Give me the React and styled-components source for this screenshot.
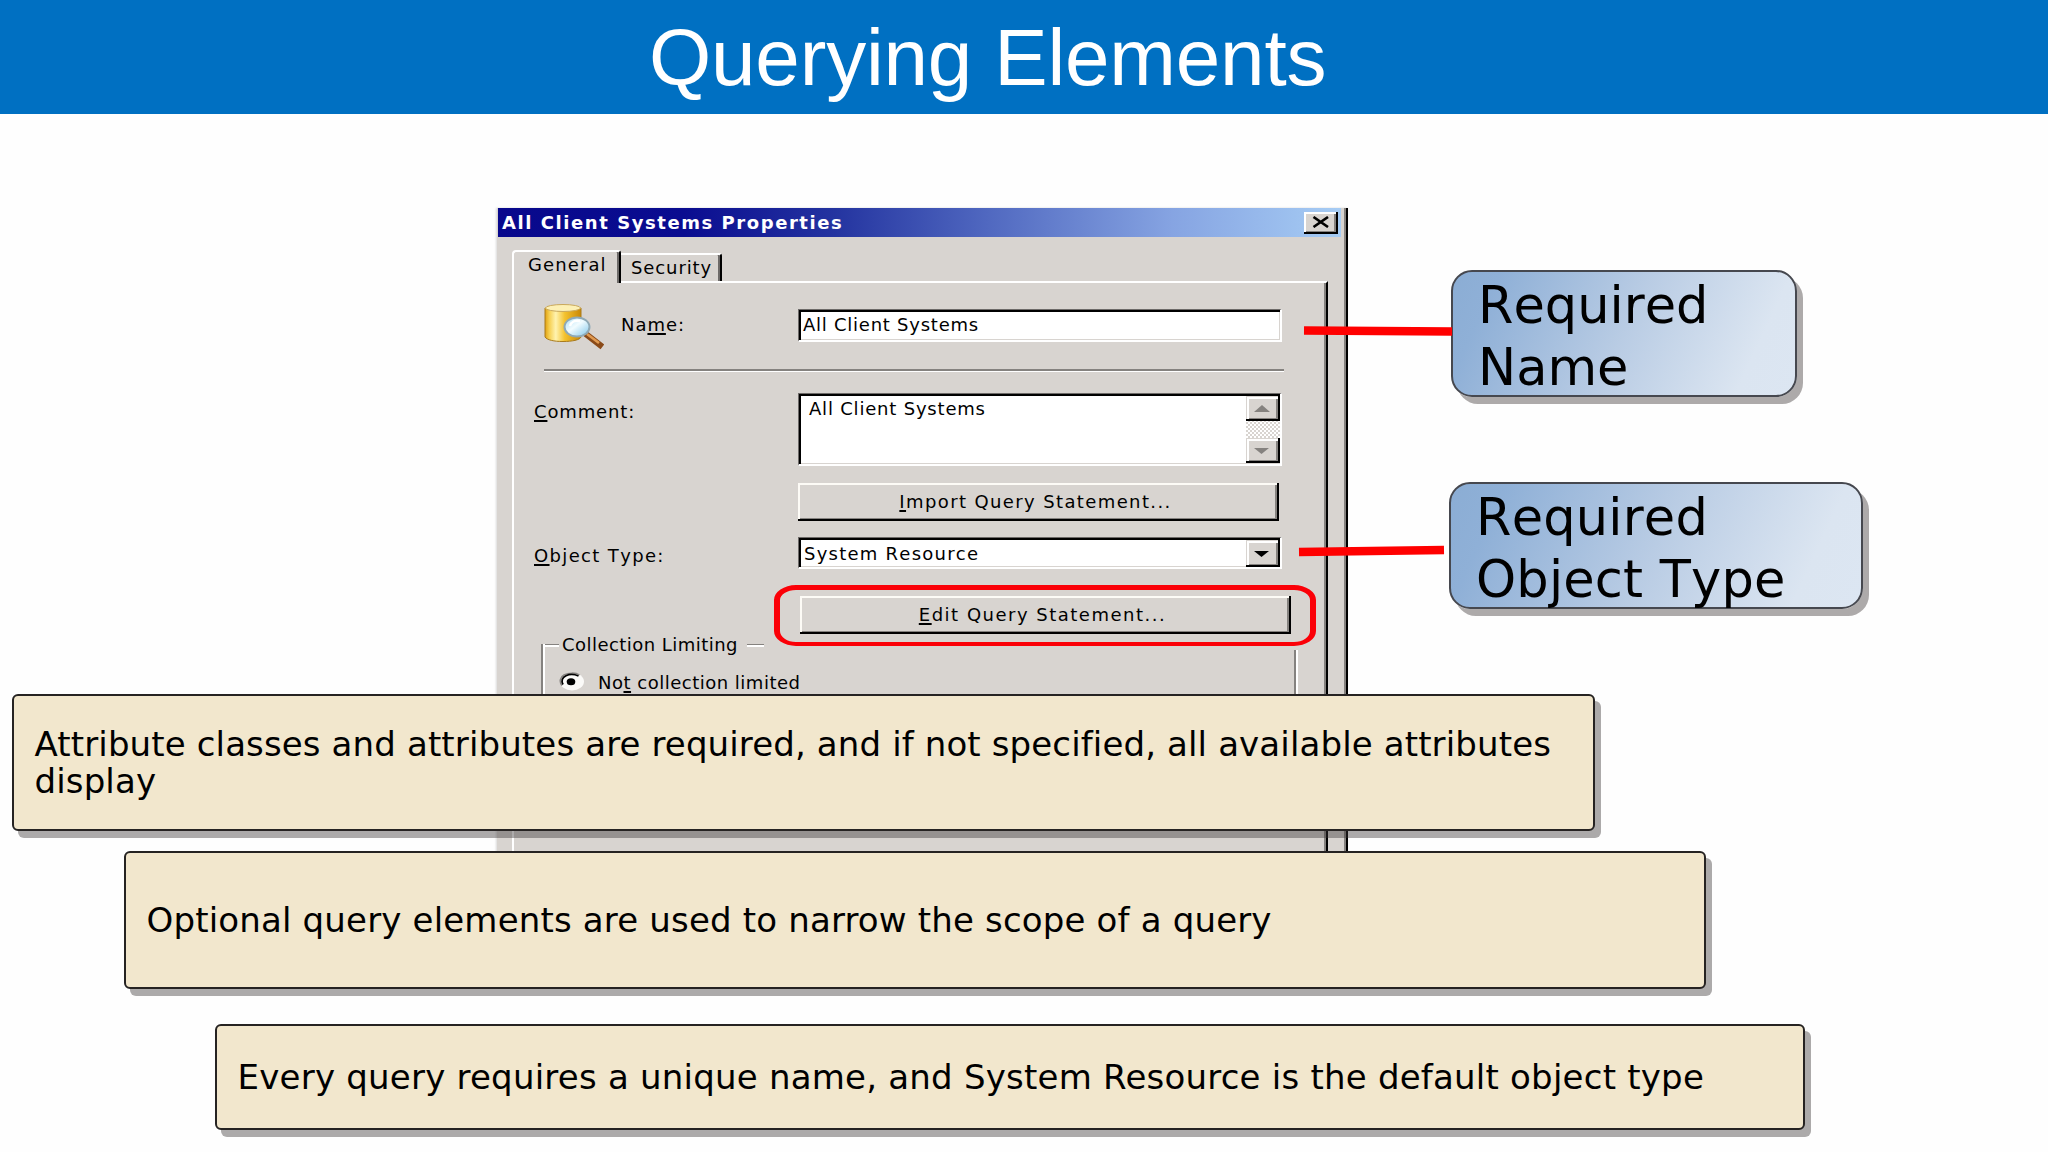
import React from "react";
import styled, { createGlobalStyle } from "styled-components";

const GlobalStyle = createGlobalStyle`
  *,
  *::after {
    box-sizing: border-box;
  }
  body {
    margin: 0;
    background-color: #fefefe;
    overflow: hidden;
  }
`;

const Slide = styled.div`
  position: relative;
  width: 2048px;
  height: 1152px;
  overflow: hidden;
  color: #000;
  font-family: "DejaVu Sans", Verdana, sans-serif;
`;

const Header = styled.header`
  height: 114px;
  padding-left: 649px;
  background-color: #0070c2;
`;

const Title = styled.h1`
  margin: 0;
  color: #fff;
  font-family: "Liberation Sans", Arial, sans-serif;
  font-size: 80px;
  font-weight: normal;
  letter-spacing: -0.18px;
  line-height: 116px;
  white-space: nowrap;
`;

const Window = styled.section`
  position: absolute;
  left: 497px;
  top: 208px;
  width: 851px;
  height: 660px;
  display: flex;
  flex-direction: column;
  background-color: #d8d4d0;
  border-right: 2px solid #000;
  box-shadow: inset -2px 0 0 #85827f, -1px 0 2px rgba(0, 0, 0, 0.15);
  font-size: 18px;
  font-kerning: none;
`;

const TitleBar = styled.div`
  display: flex;
  align-items: center;
  justify-content: space-between;
  height: 29px;
  margin: 0 5px 0 1px;
  padding: 0 3px 0 4px;
  background: linear-gradient(
    90deg,
    #08088c 0%,
    #0a0c90 22%,
    #2434a0 40%,
    #5068c0 58%,
    #86a4e2 80%,
    #a6ccf4 100%
  );
`;

const WindowTitle = styled.span`
  color: #fff;
  font-weight: bold;
  letter-spacing: 1.56px;
  line-height: 29px;
  white-space: nowrap;
`;

const CloseButton = styled.button`
  display: flex;
  align-items: center;
  justify-content: center;
  width: 34px;
  height: 22px;
  padding: 0 1px 1px 0;
  border: none;
  background-color: #d8d4d0;
  box-shadow: inset -2px -2px 0 #000, inset 2px 2px 0 #fff, inset -4px -3px 0 #85827f;
`;

const Tabs = styled.div`
  display: flex;
  align-items: flex-end;
  height: 44px;
  padding-left: 15px;
`;

const Tab = styled.div`
  position: relative;
  height: ${(props) => (props.$active ? 33 : 28)}px;
  width: ${(props) => (props.$active ? 109 : 101)}px;
  margin-bottom: ${(props) => (props.$active ? -2 : 0)}px;
  padding-left: ${(props) => (props.$active ? 14 : 10)}px;
  border-top: 2px solid #fff;
  border-left: ${(props) => (props.$active ? "2px solid #fff" : "none")};
  border-right: 2px solid #000;
  border-top-left-radius: ${(props) => (props.$active ? 4 : 0)}px;
  border-top-right-radius: 3px;
  box-shadow: inset -2px 0 0 #6d6a68;
  background-color: #d8d4d0;
  letter-spacing: ${(props) => (props.$active ? 1.1 : 0.9)}px;
  line-height: 26px;
  z-index: ${(props) => (props.$active ? 1 : 0)};
`;

const Panel = styled.div`
  flex: 1;
  display: flex;
  flex-direction: column;
  margin: 0 18px 0 15px;
  padding: 26px 0 0 20px;
  border-left: 2px solid #fff;
  border-top: 2px solid #fff;
  border-right: 2px solid #000;
  box-shadow: inset -2px 0 0 #85827f;
`;

const FormRow = styled.div`
  display: grid;
  grid-template-columns: 264px 1fr;
  grid-template-rows: 100%;
  height: ${(props) => props.height}px;
  margin-bottom: ${(props) => props.gap || 0}px;
`;

const Label = styled.label`
  display: flex;
  align-items: flex-start;
  padding-top: ${(props) => props.drop || 0}px;
  letter-spacing: ${(props) => props.spacing}px;
  line-height: 26px;
  white-space: pre;

  u {
    text-decoration-thickness: 2px;
    text-underline-offset: 2px;
  }
`;

const NameLabel = styled.div`
  display: flex;
  padding-left: 10px;
  gap: 17px;

  svg {
    margin-top: -5px;
  }
`;

const Field = styled.div`
  display: flex;
  justify-content: space-between;
  width: 484px;
  padding-left: ${(props) => props.inset || 2}px;
  border: 1px solid;
  border-width: 1px 2px 2px 1px;
  border-color: #6d6a68 #fff #fff #6d6a68;
  background-color: #fff;
  box-shadow: inset 2px 2px 0 #000, inset -1px -1px 0 #d8d4d0;
  letter-spacing: ${(props) => props.spacing}px;
  line-height: ${(props) => props.line}px;
  white-space: nowrap;
`;

const ScrollBar = styled.div`
  display: flex;
  flex-direction: column;
  justify-content: space-between;
  width: 34px;
  margin: 2px 0 1px 0;
  background: repeating-conic-gradient(#d8d4d0 0% 25%, #fff 0% 50%) 0 0 / 4px 4px;
`;

const ArrowButton = styled.button`
  display: flex;
  align-items: center;
  justify-content: center;
  width: 34px;
  height: ${(props) => props.height}px;
  margin: ${(props) => props.offset || "0"};
  padding: 0 3px 0 0;
  border: none;
  background-color: #d8d4d0;
  box-shadow: inset -2px -2px 0 #000, inset 1px 1px 0 #d8d4d0, inset 3px 3px 0 #fff,
    inset -4px -3px 0 #85827f;
`;

const PushButton = styled.button`
  width: ${(props) => props.width}px;
  height: 38px;
  margin: 0 0 0 ${(props) => props.shift || 0}px;
  padding: 0 6px 0 0;
  border: none;
  background-color: #d8d4d0;
  box-shadow: inset -2px -2px 0 #000, inset 2px 2px 0 #fdfbf6, inset -4px -3px 0 #85827f;
  font-family: inherit;
  font-size: 18px;
  letter-spacing: ${(props) => props.spacing}px;
  line-height: 38px;

  u {
    text-decoration-thickness: 2px;
    text-underline-offset: 2px;
  }
`;

const Divider = styled.hr`
  width: 740px;
  height: 3px;
  margin: 27px 0 21px 10px;
  border: none;
  border-top: 2px solid #85827f;
  border-bottom: 1px solid #fff;
`;

const Highlight = styled.div`
  position: relative;

  &::after {
    content: "";
    position: absolute;
    left: -24px;
    top: -11px;
    width: 542px;
    height: 61px;
    border: solid #fb0007;
    border-width: 5px 6px 4px;
    border-radius: 22px / 15px;
  }
`;

const Group = styled.div`
  display: flex;
  flex-direction: column;
  height: 180px;
  margin-left: 7px;
`;

const Legend = styled.div`
  display: flex;
  align-items: flex-start;
  height: 20px;
  letter-spacing: 0.46px;
  line-height: 16px;
  white-space: nowrap;
`;

const LegendLine = styled.span`
  width: ${(props) => props.width}px;
  height: 3px;
  margin: ${(props) => props.space};
  border-top: 1px solid #85827f;
  border-bottom: 2px solid #fff;
`;

const GroupBody = styled.div`
  flex: 1;
  display: flex;
  align-items: flex-start;
  gap: 13px;
  width: 757px;
  margin-top: -13px;
  padding: 28px 0 0 16px;
  border-left: 2px solid #85827f;
  box-shadow: inset 2px 0 0 #fff;
  background: linear-gradient(90deg, #85827f 0 2px, #fff 2px 4px) right 6px / 4px 100% no-repeat;
`;

const GroupOption = styled(Label)`
  margin-top: -2px;
`;

const Callout = styled.div`
  position: absolute;
  left: ${(props) => props.x}px;
  top: ${(props) => props.y}px;
  width: ${(props) => props.width}px;
  height: 127px;
  padding: ${(props) => props.drop}px 0 0 25px;
  border: 2px solid #46484f;
  border-radius: 21px;
  background: linear-gradient(115deg, #8badd4 0%, #8fb0d7 12%, #b9cce4 50%, #dbe5f1 85%, #dce6f2 100%);
  box-shadow: 6px 7px 0 #adaaaa;
  font-size: 51px;
  font-kerning: none;
  letter-spacing: ${(props) => props.spacing}px;
  line-height: 62px;
  white-space: pre-line;
`;

const Note = styled.div`
  position: absolute;
  left: ${(props) => props.x}px;
  top: ${(props) => props.y}px;
  width: ${(props) => props.width}px;
  height: ${(props) => props.height}px;
  display: flex;
  align-items: center;
  padding-left: 20.5px;
  border: 2px solid #262322;
  border-radius: 6px;
  background-color: #f2e7cd;
  box-shadow: 6px 7px 0 rgba(60, 55, 55, 0.42);
  font-size: 34px;
  letter-spacing: ${(props) => props.spacing}px;
  line-height: 37px;
  white-space: pre-line;
`;

const Connectors = styled.svg`
  position: absolute;
  left: 1290px;
  top: 310px;
`;

const CALLOUTS = [
  { text: "Required\nName", x: 1451, y: 270, width: 346, drop: 3, spacing: 0 },
  { text: "Required\nObject Type", x: 1449, y: 482, width: 414, drop: 3, spacing: 0.2 },
];

const NOTES = [
  {
    text: "Attribute classes and attributes are required, and if not specified, all available attributes\ndisplay",
    x: 12,
    y: 694,
    width: 1583,
    height: 137,
    spacing: 0.13,
  },
  {
    text: "Optional query elements are used to narrow the scope of a query",
    x: 124,
    y: 851,
    width: 1582,
    height: 138,
    spacing: 0.17,
  },
  {
    text: "Every query requires a unique name, and System Resource is the default object type",
    x: 215,
    y: 1024,
    width: 1590,
    height: 106,
    spacing: 0.22,
  },
];

const QueryIcon = () => (
  <svg width="60" height="46" viewBox="0 0 60 46">
    <defs>
      <linearGradient id="drum" x1="0" x2="1" y1="0" y2="0">
        <stop offset="0" stopColor="#e0a010" />
        <stop offset="0.12" stopColor="#f6cf50" />
        <stop offset="0.3" stopColor="#fff3b0" />
        <stop offset="0.55" stopColor="#f4c22e" />
        <stop offset="1" stopColor="#c98806" />
      </linearGradient>
      <linearGradient id="lens" x1="0" x2="1" y1="0" y2="1">
        <stop offset="0" stopColor="#a9dcf2" />
        <stop offset="0.45" stopColor="#f2fcff" />
        <stop offset="1" stopColor="#7cc4e8" />
      </linearGradient>
    </defs>
    <path d="M1 4v29c2 3 9 4.500 18 4.500s17-1.500 18-4.500V4z" fill="url(#drum)" stroke="#a87a1c" />
    <ellipse cx="19" cy="4" rx="17.500" ry="3.500" fill="#fdf0b4" stroke="#c9a85c" />
    <path d="M43 31l13 10" stroke="#8a4a18" strokeWidth="6" strokeLinecap="square" />
    <path d="M43 30l12 9" stroke="#e09a50" strokeWidth="2.500" />
    <ellipse cx="33" cy="23" rx="12.500" ry="9.500" fill="url(#lens)" stroke="#8fa9b5" strokeWidth="2" />
    <path d="M26 22c1-4 5-6 10-5" fill="none" stroke="#fff" strokeWidth="2.500" />
  </svg>
);

const Arrow = ({ up, color }) => (
  <svg width="16" height="8" viewBox="0 0 16 8">
    <path d={up ? "M0 7h16L8 0z" : "M0 1h15L7.500 7z"} fill={color} />
  </svg>
);

const Radio = () => (
  <svg width="26" height="19" viewBox="0 0 26 19">
    <ellipse cx="13" cy="9.500" rx="12" ry="9" fill="#fbfaf8" />
    <path d="M3 13.500C0 10 1 5 5 3S16 0 20.500 3" fill="none" stroke="#85827f" strokeWidth="1.500" />
    <path d="M4 12.500C2 9 3 5.500 7 3.700s8.500-1.500 12.500.3" fill="none" stroke="#000" strokeWidth="1.800" />
    <ellipse cx="12" cy="9.800" rx="4.300" ry="3.500" fill="#000" />
  </svg>
);

function App() {
  return (
    <Slide>
      <GlobalStyle />
      <Header>
        <Title>Querying Elements</Title>
      </Header>

      <Window>
        <TitleBar>
          <WindowTitle>All Client Systems Properties</WindowTitle>
          <CloseButton>
            <svg width="18" height="12" viewBox="0 0 18 12">
              <path d="M1.500 1L16 11M16 1L1.500 11" fill="none" stroke="#000" strokeWidth="2.600" />
            </svg>
          </CloseButton>
        </TitleBar>
        <Tabs>
          <Tab $active>General</Tab>
          <Tab>Security</Tab>
        </Tabs>
        <Panel>
          <FormRow height={33}>
            <NameLabel>
              <QueryIcon />
              <Label spacing={0.95} drop={3}>
                Na<u>m</u>e:
              </Label>
            </NameLabel>
            <Field spacing={0.75} line={30} inset={4}>
              All Client Systems
            </Field>
          </FormRow>
          <Divider />
          <FormRow height={73} gap={17}>
            <Label spacing={0.85} drop={6}>
              <u>C</u>omment:
            </Label>
            <Field spacing={0.8} line={29} inset={10}>
              All Client Systems
              <ScrollBar>
                <ArrowButton height={25}>
                  <Arrow up color="#85827f" />
                </ArrowButton>
                <ArrowButton height={25}>
                  <Arrow color="#85827f" />
                </ArrowButton>
              </ScrollBar>
            </Field>
          </FormRow>
          <FormRow height={38} gap={16}>
            <span />
            <PushButton width={481} spacing={1.38}>
              <u>I</u>mport Query Statement...
            </PushButton>
          </FormRow>
          <FormRow height={32} gap={27}>
            <Label spacing={1.35} drop={6}>
              <u>O</u>bject Type:
            </Label>
            <Field spacing={1.25} line={31} inset={5}>
              System Resource
              <ArrowButton height={27} offset="2px 0 0 0">
                <Arrow color="#000" />
              </ArrowButton>
            </Field>
          </FormRow>
          <FormRow height={38} gap={3}>
            <span />
            <Highlight>
              <PushButton width={491} spacing={1.5} shift={2}>
                <u>E</u>dit Query Statement...
              </PushButton>
            </Highlight>
          </FormRow>
          <Group>
            <Legend>
              <LegendLine width={18} space="7px 3px 0 0" />
              Collection Limiting
              <LegendLine width={17} space="7px 0 0 9px" />
            </Legend>
            <GroupBody>
              <Radio />
              <GroupOption spacing={0.5}>
                No<u>t</u> collection limited
              </GroupOption>
            </GroupBody>
          </Group>
        </Panel>
      </Window>

      {CALLOUTS.map((item) => (
        <Callout
          key={item.text}
          x={item.x}
          y={item.y}
          width={item.width}
          drop={item.drop}
          spacing={item.spacing}
        >
          {item.text}
        </Callout>
      ))}

      <Connectors width="170" height="260" viewBox="1290 310 170 260">
        <path d="M1304 330.500L1452 331.500M1299 552L1444 550" stroke="#ff0000" strokeWidth="8.500" />
      </Connectors>

      {NOTES.map((note) => (
        <Note
          key={note.x}
          x={note.x}
          y={note.y}
          width={note.width}
          height={note.height}
          spacing={note.spacing}
        >
          {note.text}
        </Note>
      ))}
    </Slide>
  );
}

export default App;
